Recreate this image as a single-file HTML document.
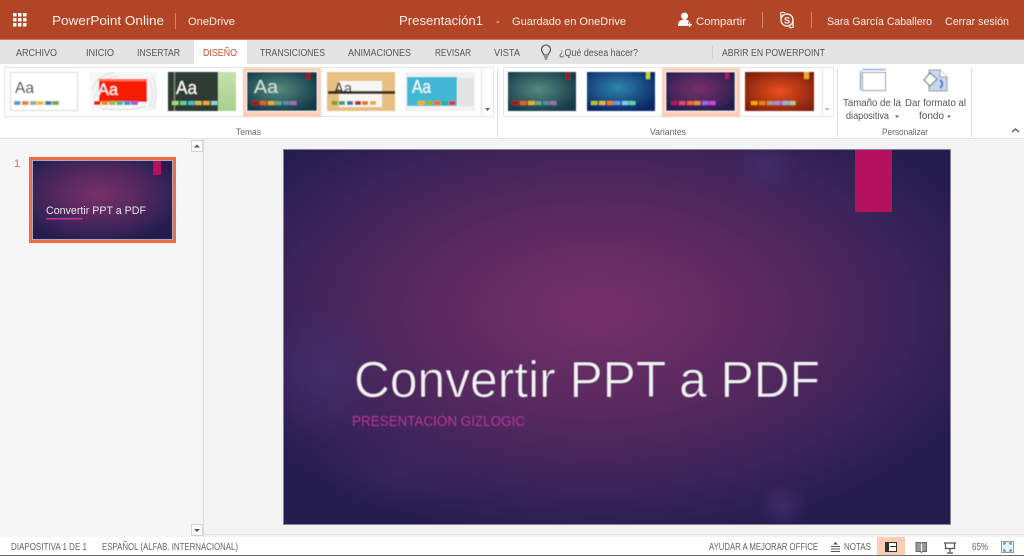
<!DOCTYPE html>
<html lang="es"><head><meta charset="utf-8"><title>PowerPoint Online</title>
<style>html,body{margin:0;padding:0;background:#fff;width:1024px;height:556px;overflow:hidden}svg{display:block}text{font-family:"Liberation Sans",sans-serif}</style></head>
<body>
<svg width="1024" height="556" viewBox="0 0 1024 556" xmlns="http://www.w3.org/2000/svg">
<defs>
<filter id="b" x="-5%" y="-50%" width="110%" height="200%"><feGaussianBlur stdDeviation="0.35"/></filter>
<filter id="b2" x="-5%" y="-5%" width="110%" height="110%"><feGaussianBlur stdDeviation="0.4"/></filter>
<radialGradient id="pur" cx="0.47" cy="0.43" r="0.62"><stop offset="0" stop-color="#763069"/><stop offset="0.45" stop-color="#57295f"/><stop offset="0.8" stop-color="#372357"/><stop offset="1" stop-color="#251d4e"/></radialGradient>
<radialGradient id="teal" cx="0.45" cy="0.45" r="0.62"><stop offset="0" stop-color="#568a7e"/><stop offset="1" stop-color="#143a4a"/></radialGradient>
<radialGradient id="blue" cx="0.45" cy="0.4" r="0.65"><stop offset="0" stop-color="#2f86aa"/><stop offset="1" stop-color="#0a2766"/></radialGradient>
<radialGradient id="red" cx="0.5" cy="0.5" r="0.62"><stop offset="0" stop-color="#ea5020"/><stop offset="1" stop-color="#801f0c"/></radialGradient>
<radialGradient id="blob"><stop offset="0" stop-color="#443070" stop-opacity=".7"/><stop offset="1" stop-color="#443070" stop-opacity="0"/></radialGradient>
<linearGradient id="grn" x1="0" x2="0" y1="0" y2="1"><stop offset="0" stop-color="#c6e0ac"/><stop offset="1" stop-color="#a8d08c"/></linearGradient>
</defs>

<!-- base regions -->
<rect width="1024" height="556" fill="#fff"/>
<rect width="1024" height="40" fill="#b34527"/>
<rect y="39" width="1024" height="1" fill="#c9775f"/>
<rect y="40" width="1024" height="24" fill="#e4e4e4"/>
<rect x="194" y="40" width="53" height="24" fill="#fff"/>
<rect y="138" width="1024" height="1" fill="#e2e2e2"/>
<rect y="139" width="1024" height="398" fill="#f3f3f3"/>
<rect x="0" y="139" width="203" height="398" fill="#f6f6f6"/>
<rect x="203" y="139" width="1" height="398" fill="#dcdcdc"/>
<rect y="534" x="204" width="820" height="1" fill="#e4e4e4"/>
<rect y="537" width="1024" height="18" fill="#fff"/>
<rect y="555" width="1024" height="1" fill="#6a6a6a"/>

<!-- galleries -->
<g fill="none" stroke="#e6e6e6">
<rect x="4.500" y="67.500" width="489" height="49"/>
<rect x="503.500" y="67.500" width="330" height="49"/>
<path d="M481.500 68V116M822.500 68V116"/>
</g>
<g fill="#dedede"><rect x="497" y="68" width="1" height="69"/><rect x="837" y="68" width="1" height="69"/><rect x="971" y="68" width="1" height="69"/></g>
<path d="M485 108h5l-2.500 3z" fill="#666"/>
<path d="M824.500 108h5l-2.500 3z" fill="#bbb"/>
<path d="M1012 132l3.500-3 3.500 3" fill="none" stroke="#555" stroke-width="1.300"/>

<g filter="url(#b2)">
<!-- t1 -->
<rect x="10.500" y="72.500" width="67" height="38" fill="#fff" stroke="#d8d8d8"/>
<text x="15" y="93" font-size="16" fill="#111" textLength="19" lengthAdjust="spacingAndGlyphs">Aa</text>
<g><rect x="14" y="101" width="6.500" height="4" fill="#5b9bd5"/><rect x="22" y="101" width="6.500" height="4" fill="#ed7d31"/><rect x="30" y="101" width="6.500" height="4" fill="#a5a5a5"/><rect x="37" y="101" width="6.500" height="4" fill="#ffc000"/><rect x="45" y="101" width="6.500" height="4" fill="#4472c4"/><rect x="52" y="101" width="7" height="4" fill="#70ad47"/></g>
<!-- t2 -->
<rect x="90" y="72" width="67" height="39" fill="#f7f7f7"/>
<path d="M92 90c4-12 14-17 22-17M94 99c3-12 12-22 24-23M147 78c6 6 8 20 2 30M152 76c5 9 5 24 1 32M100 108c14 3 34 2 46-2" fill="none" stroke="#e2e2e2" stroke-width="1.500"/>
<rect x="99" y="79" width="48" height="23" fill="#f51c00"/>
<rect x="99" y="80" width="48" height="1" fill="#ff8a70"/>
<text x="98" y="95" font-size="17" fill="#fff" textLength="20" lengthAdjust="spacingAndGlyphs">Aa</text>
<g><rect x="94" y="101" width="6.500" height="4" fill="#f51c00"/><rect x="101.500" y="101" width="6.500" height="4" fill="#f28a1c"/><rect x="109" y="101" width="6.500" height="4" fill="#a2b93c"/><rect x="116.500" y="101" width="6.500" height="4" fill="#3dbb9c"/><rect x="124" y="101" width="6.500" height="4" fill="#3a99d0"/><rect x="131" y="101" width="7" height="4" fill="#a45fc8"/></g>
<!-- t3 -->
<rect x="168" y="72" width="68" height="39" fill="url(#grn)"/>
<rect x="168" y="72" width="50" height="39" fill="#2d3a30"/>
<rect x="174" y="72" width="1" height="39" fill="#8a9a8a"/>
<text x="176" y="94" font-size="18" fill="#fff" textLength="21" lengthAdjust="spacingAndGlyphs">Aa</text>
<g><rect x="172" y="101" width="6.500" height="4" fill="#a5d86a"/><rect x="180" y="101" width="6.500" height="4" fill="#5fcf9c"/><rect x="188" y="101" width="6.500" height="4" fill="#4db6d8"/><rect x="195" y="101" width="6.500" height="4" fill="#d8c050"/><rect x="203" y="101" width="6.500" height="4" fill="#e8a83c"/><rect x="211" y="101" width="6.500" height="4" fill="#90cfd0"/></g>
<!-- t4 selected -->
<rect x="243" y="68" width="78" height="49" fill="#fbcdb5"/>
<rect x="246" y="71" width="72" height="41" fill="#fff"/>
<rect x="247" y="72" width="70" height="39" fill="url(#teal)"/>
<rect x="306" y="73" width="4" height="6" fill="#b11116"/>
<text x="254" y="93" font-size="18" fill="#cfe3de" textLength="24" lengthAdjust="spacingAndGlyphs">Aa</text>
<g><rect x="252" y="101" width="6.500" height="4" fill="#b11116"/><rect x="260" y="101" width="6.500" height="4" fill="#e8640f"/><rect x="268" y="101" width="6.500" height="4" fill="#e8b020"/><rect x="275" y="101" width="6.500" height="4" fill="#68a890"/><rect x="283" y="101" width="6.500" height="4" fill="#568aa8"/><rect x="290" y="101" width="6.500" height="4" fill="#a868b0"/></g>
<!-- t5 -->
<rect x="327" y="72" width="68" height="39" fill="#e8bf82"/>
<rect x="339" y="81" width="43" height="26" fill="#f6f6f4"/>
<rect x="328" y="91" width="67" height="3" fill="#3a3028"/>
<text x="334" y="94" font-size="17" fill="#222" textLength="18" lengthAdjust="spacingAndGlyphs">Aa</text>
<g><rect x="331.500" y="101" width="6" height="4" fill="#8aa028"/><rect x="339" y="101" width="6" height="4" fill="#3da080"/><rect x="347" y="101" width="6" height="4" fill="#3d78a8"/><rect x="355" y="101" width="6" height="4" fill="#b0342c"/><rect x="362" y="101" width="6" height="4" fill="#e07c28"/><rect x="370" y="101" width="6" height="4" fill="#e0b030"/></g>
<!-- t6 -->
<rect x="405" y="72" width="70" height="39" fill="#f2f2f2"/>
<rect x="458" y="78" width="16" height="28" fill="#e3e3e3"/>
<rect x="407" y="77" width="50" height="29" fill="#3fb8d3"/>
<text x="412" y="93" font-size="18" fill="#fff" textLength="19" lengthAdjust="spacingAndGlyphs">Aa</text>
<g><rect x="418" y="101" width="6.500" height="4" fill="#f7b500"/><rect x="426" y="101" width="6.500" height="4" fill="#93b91c"/><rect x="434" y="101" width="6.500" height="4" fill="#ef6c00"/><rect x="441.500" y="101" width="6.500" height="4" fill="#1cb497"/><rect x="449" y="101" width="6.500" height="4" fill="#db3a3e"/></g>
<!-- v1 -->
<rect x="508" y="72" width="68" height="39" fill="url(#teal)"/>
<rect x="566" y="73" width="4" height="6" fill="#b11116"/>
<g><rect x="512" y="101" width="6.500" height="4" fill="#b11116"/><rect x="520" y="101" width="6.500" height="4" fill="#e8640f"/><rect x="528" y="101" width="6.500" height="4" fill="#e8b020"/><rect x="535" y="101" width="6.500" height="4" fill="#68a890"/><rect x="543" y="101" width="6.500" height="4" fill="#568aa8"/><rect x="550" y="101" width="6.500" height="4" fill="#a868b0"/></g>
<!-- v2 -->
<rect x="587" y="72" width="68" height="39" fill="url(#blue)"/>
<rect x="646" y="72" width="4" height="7" fill="#c6d62b"/>
<g><rect x="591" y="101" width="6.500" height="4" fill="#a9c52d"/><rect x="599" y="101" width="6.500" height="4" fill="#e3b52c"/><rect x="607" y="101" width="6.500" height="4" fill="#ef7c1b"/><rect x="614" y="101" width="6.500" height="4" fill="#5b9ee8"/><rect x="622" y="101" width="6.500" height="4" fill="#74cdf0"/><rect x="629" y="101" width="6.500" height="4" fill="#64d39a"/></g>
<!-- v3 selected -->
<rect x="662" y="68" width="78" height="49" fill="#fbcdb5"/>
<rect x="665" y="71" width="71" height="41" fill="#fff"/>
<rect x="666" y="72" width="69" height="39" fill="url(#pur)"/>
<rect x="725" y="73" width="4" height="6" fill="#b5125f"/>
<g><rect x="671" y="101" width="6.500" height="4" fill="#b5125f"/><rect x="679" y="101" width="6.500" height="4" fill="#e64272"/><rect x="687" y="101" width="6.500" height="4" fill="#e9673c"/><rect x="694" y="101" width="6.500" height="4" fill="#e0963a"/><rect x="702" y="101" width="6.500" height="4" fill="#9467e8"/><rect x="709" y="101" width="6.500" height="4" fill="#d245d8"/></g>
<!-- v4 -->
<rect x="745" y="72" width="69" height="39" fill="url(#red)"/>
<rect x="804" y="72" width="5" height="7" fill="#f0a928"/>
<g><rect x="751" y="101" width="6.500" height="4" fill="#f5a800"/><rect x="759" y="101" width="6.500" height="4" fill="#f07f0e"/><rect x="767" y="101" width="6.500" height="4" fill="#b29a7e"/><rect x="774" y="101" width="6.500" height="4" fill="#a78ad8"/><rect x="782" y="101" width="6.500" height="4" fill="#88b8d8"/><rect x="789" y="101" width="6.500" height="4" fill="#a8c898"/></g>
<!-- ribbon icons -->
<rect x="862.500" y="72.500" width="23" height="18" fill="#fff" stroke="#999"/>
<path d="M860.500 71V90.500M862 69.500H886" fill="none" stroke="#5b93d4" stroke-width="1"/>
<path d="M929 70h11l7 7v14h-18z" fill="#c4d9f0" stroke="#999"/>
<path d="M940 70v7h7" fill="#fff" stroke="#999"/>
<path d="M930 73l-6 7 6 6 7-7z" fill="#fff" stroke="#666"/>
<path d="M940 80c3 2 3 6 0 8" fill="none" stroke="#3f7fc4" stroke-width="2"/>
</g>

<!-- slide -->
<rect x="283" y="149" width="668" height="376" fill="#8b8096"/>
<rect x="284" y="150" width="666" height="374" fill="url(#pur)"/>
<clipPath id="s"><rect x="284" y="150" width="666" height="374"/></clipPath>
<g clip-path="url(#s)">
<ellipse cx="765" cy="166" rx="32" ry="28" fill="url(#blob)"/>
<ellipse cx="325" cy="372" rx="60" ry="70" fill="url(#blob)"/>
<ellipse cx="783" cy="506" rx="26" ry="24" fill="url(#blob)"/>
<ellipse cx="400" cy="470" rx="80" ry="45" fill="url(#blob)" opacity=".4"/>
</g>
<rect x="855" y="150" width="37" height="62" fill="#b4125f"/>
<g filter="url(#b2)">
<text x="354" y="397" font-size="51" fill="#f4f4f6" stroke="#5a2a62" stroke-width="1.100" paint-order="normal" textLength="466" lengthAdjust="spacingAndGlyphs">Convertir PPT a PDF</text>
<text x="352" y="426" font-size="15" fill="#c83aa2" stroke="#5a2a62" stroke-width="0.300" textLength="173" lengthAdjust="spacingAndGlyphs">PRESENTACIÓN GIZLOGIC</text>
</g>

<!-- thumbnail -->
<rect x="29" y="157" width="147" height="86" fill="#ef6c46"/>
<rect x="32" y="160" width="141" height="80" fill="#b0a8bc"/>
<rect x="33" y="161" width="139" height="78" fill="url(#pur)"/>
<rect x="153" y="161" width="8" height="14" fill="#b4125f"/>
<g filter="url(#b)">
<text x="46" y="214" font-size="11" fill="#e8e4ec" textLength="100" lengthAdjust="spacingAndGlyphs">Convertir PPT a PDF</text>
<rect x="46" y="218" width="37" height="1.500" fill="#c0309a"/>
<text x="14" y="167" font-size="11" fill="#e2714c">1</text>
</g>
<!-- pane scroll buttons -->
<rect x="191.500" y="140.500" width="11" height="11" fill="#fafafa" stroke="#d4d4d4"/>
<path d="M194 147.500h6l-3-3z" fill="#555"/>
<rect x="191.500" y="524.500" width="11" height="11" fill="#fafafa" stroke="#d4d4d4"/>
<path d="M194 529h6l-3 3z" fill="#555"/>

<!-- header -->
<g fill="#fff">
<rect x="13" y="13" width="3.500" height="3.500"/><rect x="18" y="13" width="3.500" height="3.500"/><rect x="23" y="13" width="3.500" height="3.500"/>
<rect x="13" y="18" width="3.500" height="3.500"/><rect x="18" y="18" width="3.500" height="3.500"/><rect x="23" y="18" width="3.500" height="3.500"/>
<rect x="13" y="23" width="3.500" height="3.500"/><rect x="18" y="23" width="3.500" height="3.500"/><rect x="23" y="23" width="3.500" height="3.500"/>
</g>
<g fill="#cf8a74"><rect x="175" y="13" width="1" height="16"/><rect x="762" y="12" width="1" height="16"/><rect x="811" y="12" width="1" height="16"/></g>
<g filter="url(#b)">
<circle cx="684.500" cy="16" r="3.500" fill="#fff"/>
<path d="M678 26c0-5 3-6.500 6.500-6.500 2 0 3.500.5 4.500 1.500l-1 1.500v3.500z" fill="#fff"/>
<path d="M689.500 22.500v4.500M687.300 24.700h4.500" stroke="#fff" stroke-width="1.500"/>
<circle cx="787" cy="20" r="6" fill="none" stroke="#fff" stroke-width="1.300"/>
<path d="M780 13.500c2-1.500 4-1.300 5-.5M794 26.500c-2 1.500-4 1.300-5 .5M781 14v4M793 26v-4" fill="none" stroke="#fff" stroke-width="1.300"/>
<text x="784" y="23.500" font-size="9" fill="#fff" style="font-weight:700">S</text>
<g fill="#fbeee9">
<text x="52" y="25" font-size="13" textLength="112" lengthAdjust="spacingAndGlyphs">PowerPoint Online</text>
<text x="188" y="25" font-size="11" textLength="47" lengthAdjust="spacingAndGlyphs">OneDrive</text>
<text x="399" y="25" font-size="13" textLength="84" lengthAdjust="spacingAndGlyphs">Presentación1</text>
<text x="496" y="25" font-size="11">-</text>
<text x="512" y="25" font-size="11" textLength="114" lengthAdjust="spacingAndGlyphs">Guardado en OneDrive</text>
<text x="696" y="25" font-size="11" textLength="50" lengthAdjust="spacingAndGlyphs">Compartir</text>
<text x="827" y="25" font-size="11" textLength="105" lengthAdjust="spacingAndGlyphs">Sara García Caballero</text>
<text x="945" y="25" font-size="11" textLength="64" lengthAdjust="spacingAndGlyphs">Cerrar sesión</text>
</g>

<!-- tabs -->
<g fill="#555">
<text x="16" y="56" font-size="10" textLength="41" lengthAdjust="spacingAndGlyphs">ARCHIVO</text>
<text x="86" y="56" font-size="10" textLength="28" lengthAdjust="spacingAndGlyphs">INICIO</text>
<text x="137" y="56" font-size="10" textLength="43" lengthAdjust="spacingAndGlyphs">INSERTAR</text>
<text x="203" y="56" font-size="10" fill="#c8502f" textLength="34" lengthAdjust="spacingAndGlyphs">DISEÑO</text>
<text x="260" y="56" font-size="10" textLength="65" lengthAdjust="spacingAndGlyphs">TRANSICIONES</text>
<text x="348" y="56" font-size="10" textLength="63" lengthAdjust="spacingAndGlyphs">ANIMACIONES</text>
<text x="435" y="56" font-size="10" textLength="36" lengthAdjust="spacingAndGlyphs">REVISAR</text>
<text x="494" y="56" font-size="10" textLength="26" lengthAdjust="spacingAndGlyphs">VISTA</text>
<text x="559" y="56" font-size="10" textLength="79" lengthAdjust="spacingAndGlyphs">¿Qué desea hacer?</text>
<text x="722" y="56" font-size="10" textLength="103" lengthAdjust="spacingAndGlyphs">ABRIR EN POWERPOINT</text>
</g>
<path d="M544 55c-.5-2-2.500-2.500-2.500-5.500a4.500 4.500 0 0 1 9 0c0 3-2 3.500-2.500 5.500z" fill="none" stroke="#444" stroke-width="1.100"/>
<path d="M544 57h4M544.800 59h2.400" stroke="#444" stroke-width="1.100"/>
<rect x="712" y="46" width="1" height="13" fill="#d0d0d0"/>

<!-- ribbon labels -->
<g fill="#666">
<text x="236" y="135" font-size="9.500" textLength="25" lengthAdjust="spacingAndGlyphs">Temas</text>
<text x="650" y="135" font-size="9.500" textLength="36" lengthAdjust="spacingAndGlyphs">Variantes</text>
<text x="882" y="135" font-size="9.500" textLength="46" lengthAdjust="spacingAndGlyphs">Personalizar</text>
<text x="843" y="106" font-size="10.500" fill="#555" textLength="58" lengthAdjust="spacingAndGlyphs">Tamaño de la</text>
<text x="846" y="119" font-size="10.500" fill="#555" textLength="43" lengthAdjust="spacingAndGlyphs">diapositiva</text>
<text x="905" y="106" font-size="10.500" fill="#555" textLength="61" lengthAdjust="spacingAndGlyphs">Dar formato al</text>
<text x="919" y="119" font-size="10.500" fill="#555" textLength="25" lengthAdjust="spacingAndGlyphs">fondo</text>
</g>
<path d="M895 115.500h4l-2 2.500zM947 115.500h4l-2 2.500z" fill="#666"/>

<!-- status bar -->
<g fill="#666">
<text x="11" y="550" font-size="10" textLength="76" lengthAdjust="spacingAndGlyphs">DIAPOSITIVA 1 DE 1</text>
<text x="102" y="550" font-size="10" textLength="136" lengthAdjust="spacingAndGlyphs">ESPAÑOL (ALFAB. INTERNACIONAL)</text>
<text x="709" y="550" font-size="10" textLength="109" lengthAdjust="spacingAndGlyphs">AYUDAR A MEJORAR OFFICE</text>
<text x="844" y="550" font-size="10" textLength="27" lengthAdjust="spacingAndGlyphs">NOTAS</text>
<text x="972" y="550" font-size="10" textLength="16" lengthAdjust="spacingAndGlyphs">65%</text>
</g>
</g>
<rect x="877" y="537" width="28" height="18" fill="#fbcdb5"/>
<g filter="url(#b)">
<path d="M835.500 542l-2.500 2.500h5z" fill="#555"/>
<path d="M831 546.500h9M831 549h9M831 551.500h9" fill="none" stroke="#555"/>
<rect x="885.500" y="542.500" width="11" height="9" fill="#fff" stroke="#333"/>
<rect x="885" y="542" width="4" height="10" fill="#333"/>
<rect x="890" y="546" width="6" height="1" fill="#333"/>
<path d="M916 542.500h4.500l1 1 1-1h4v9h-4l-1 1-1-1h-4.500z" fill="#999" stroke="#666"/>
<path d="M921.500 543.500v8" stroke="#fff"/>
<path d="M944 543h12M945.500 543v5.500h9V543M950 548.500V553M947 553h6" fill="none" stroke="#555" stroke-width="1.300"/>
<rect x="1001.500" y="541.500" width="12" height="11" fill="#e8f0f8" stroke="#999"/>
<path d="M1004 545v-2h2M1011 545v-2h-2M1004 549v2h2M1011 549v2h-2" fill="none" stroke="#3f7fc4" stroke-width="1.200"/>
</g>
</svg>
</body></html>
